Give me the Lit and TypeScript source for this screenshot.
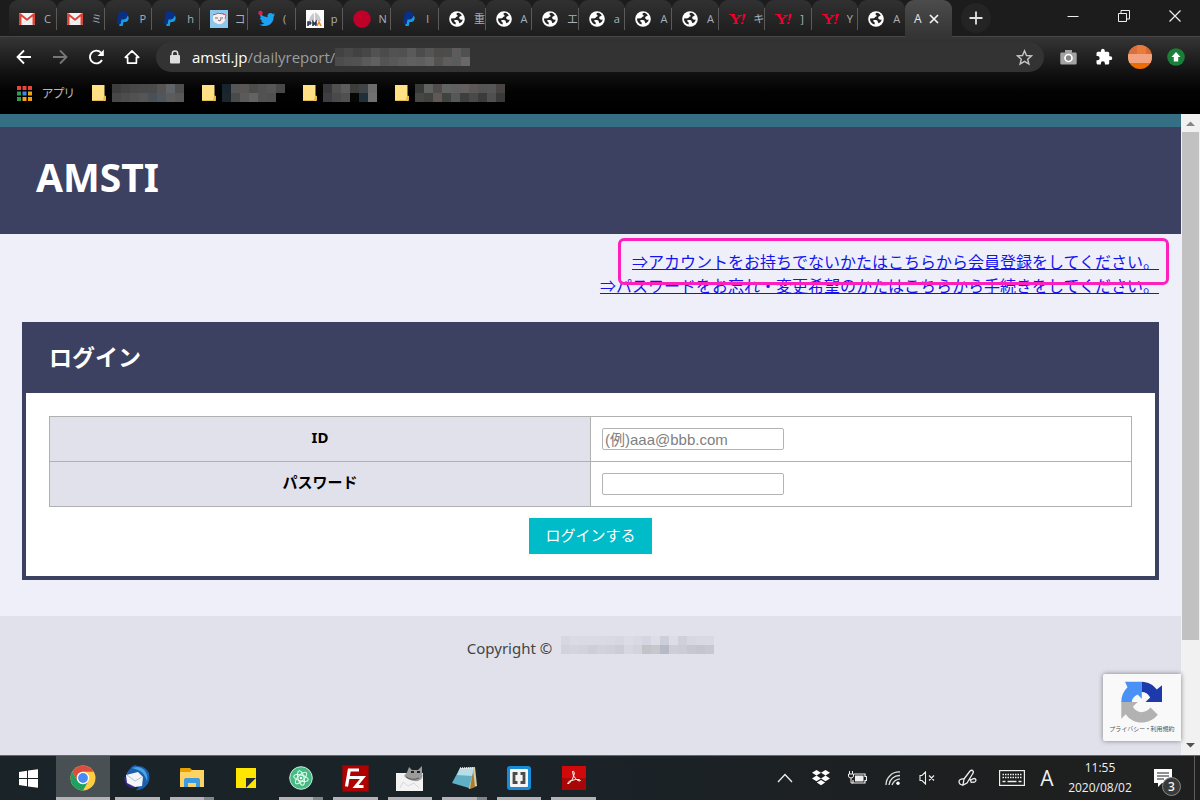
import { LitElement, html, svg, css, nothing } from "lit";
import type { TemplateResult } from "lit";
import { customElement } from "lit/decorators.js";

/* A censored label: rows of grey levels, one square per entry. */
const mosaic = (cell: number, rows: string[][]) => {
  const cols = Math.max(...rows.map((r) => r.length));
  return html`<svg
    width=${cols * cell}
    height=${rows.length * cell}
    viewBox="0 0 ${cols} ${rows.length}"
    shape-rendering="crispEdges"
    aria-hidden="true"
  >
    ${rows.map((row, y) =>
      row.map((c, x) => (c === "-" ? nothing : svg`<rect x=${x} y=${y} width="1" height="1" fill=${"#" + c} />`))
    )}
  </svg>`;
};
const cells = (s: string) => s.split(" ");

const gmail = html`<svg width="16" height="16" viewBox="0 0 16 16">
  <rect y="2" width="16" height="12" rx="1" fill="#f2f2f2" />
  <path d="M0 3v10q0 1 1 1h1.500V5.500L8 10l5.500-4.500V14H15q1 0 1-1V3q0-1-1.200-1L8 7.500 1.200 2Q0 2 0 3z" fill="#db4437" />
  <path d="M2.500 14 7 9.500M13.500 14 9 9.500" stroke="#d5d5d5" stroke-width=".7" />
</svg>`;
const paypal = html`<svg width="16" height="16" viewBox="0 0 16 16">
  <path d="M5.600 4.500h6.200c2.300.7 2.500 3.400 1 5.200-1 1.200-2.600 1.400-4.300 1.300L7.700 15H4.300z" fill="#1a9ce0" />
  <path d="M4 1h5.200c3 0 4 2 3 4.700-.8 2.300-2.600 3-5.700 2.900L5.600 13H1.800z" fill="#0a2f86" />
</svg>`;
const sheep = html`<svg width="18" height="18" viewBox="0 0 18 18">
  <rect width="18" height="18" fill="#8cc8ee" />
  <path d="M3 5q5-4 11-1 3 1 2 4l-2 4q-4 4-8 1-3-1-3-4z" fill="#f6eeee" />
  <path d="M3 5q5-3 11-1M5 8h3m2 0h3M8 10l2 1 1-2" fill="none" stroke="#685a62" stroke-width=".9" />
  <path d="M13 4l3 1-1 4" fill="none" stroke="#d85a62" />
</svg>`;
const twitter = html`<svg width="18" height="18" viewBox="0 0 18 18">
  <path d="M1.500 14.500c2 .2 3.500-.2 4.800-1.200-1.600-.1-2.700-1-3.100-2.200h1.400C3 10.500 2 9.300 2 7.800l1.400.4C2 7 1.800 5.300 2.600 3.800 4.400 5.900 6.700 7 9.500 7.200 9 4.400 10.700 3 12.400 3c1 0 1.800.4 2.400 1l2-.8-1.300 1.900 1.700-.5-1.500 1.700C15.800 12 12 16 7 16c-2 0-4-.5-5.500-1.500z" fill="#1da1f2" />
  <circle cx="2.500" cy="3" r="2.200" fill="#e01e5a" />
</svg>`;
const pma = html`<svg width="18" height="18" viewBox="0 0 18 18">
  <rect width="18" height="18" fill="#fbfbfb" />
  <path d="M3 11Q4 5 8 3v8zM9 11V2q5 3 6 9z" fill="#c9c9cd" />
  <path d="M2 16v-4h2q1.500 1 0 2H2M7 16v-4l1.500 2 1.500-2v4" fill="none" stroke="#2b3454" stroke-width="1.600" />
  <path d="M11 16l2-4 2 4" fill="none" stroke="#f08c14" stroke-width="1.600" />
</svg>`;
const dot = html`<svg width="18" height="18" viewBox="0 0 18 18"><circle cx="9" cy="9" r="8.700" fill="#bf0029" /></svg>`;
const globe = html`<svg width="16" height="16" viewBox="0 0 16 16">
  <circle cx="8" cy="8" r="7.800" fill="#fff" />
  <path d="M9 1.800c-2 .6-2 1.600-.8 2.200.8.400.6 1.500-.6 1.700-1 .2-.7 1.300-1.700 1.500L2 7.400c-.2 2.800 1.600 5.300 4.600 6.200l.2-2c-1.300-.5-1.600-1.600-1.400-2.600 2.300 0 4.300-.2 4.400 1.700l.6 1.500c1.600-.2 3-2 3.400-3.700-1.300.5-2.700.2-3.300-.7-.8-1.200 0-2.200 1-2.500l1.300-.8C12 3 10.700 2.100 9 1.800z" fill="#242424" />
</svg>`;
const yahoo = html`<svg width="17" height="16" viewBox="0 0 17 16">
  <path d="M0 3h6v1H4.800l2.500 3.500L10 5H8.700V4H13v1h-1L8 8.800V12h1.300v1H4.200v-1h1.500V8.900L1.900 4H0zM14 3h3l-2.200 6.800h-1.200zM12.800 11h2l-.7 2h-2z" fill="#f0002c" />
</svg>`;
const folder = html`<svg width="14" height="16" viewBox="0 0 14 16">
  <path d="M0 0h12.500v11H14v3.500q0 1.500-1.500 1.500H0z" fill="#ffe084" />
  <path d="M12.500 10.500q-1 1-1 3l-.5 1.800h3V11z" fill="#e9b93f" />
  <path d="M0 15.500h12" stroke="#e3bd50" />
</svg>`;

interface Tab {
  icon: TemplateResult;
  text: string;
}
const firstTabs: Tab[] = [
  { icon: gmail, text: "C" },
  { icon: gmail, text: "ミ" },
  { icon: paypal, text: "P" },
  { icon: paypal, text: "h" },
  { icon: sheep, text: "コ" },
  { icon: twitter, text: "(" },
  { icon: pma, text: "p" },
  { icon: dot, text: "N" },
  { icon: paypal, text: "l" },
];
const moreTabs: Tab[] = [
  { icon: globe, text: "重" },
  { icon: globe, text: "A" },
  { icon: globe, text: "エ" },
  { icon: globe, text: "a" },
  { icon: globe, text: "A" },
  { icon: globe, text: "A" },
  { icon: yahoo, text: "キ" },
  { icon: yahoo, text: "]" },
  { icon: yahoo, text: "Y" },
  { icon: globe, text: "A" },
];

const address = mosaic(9, [
  cells("424242 484848 424242 464646 525252 4b4b4b 525252 505050 5a5a5a 4c4c4c 555555 4e4a4a 4c4c4c 5c5c5c 505050"),
  cells("4c4c4c 505050 525252 5a5a5a 606060 545454 585858 5c5c5c 606060 5c5e60 646464 545250 605c5a 585c5c 686868"),
]);

const bookmarks = [
  mosaic(9, [
    cells("3d3d3d 434343 474747 494949 4a4a4a 545454 606468 4e4e4e"),
    cells("484848 4d4d4d 515151 555555 4a5058 505560 5c5c5c 585858"),
  ]),
  mosaic(9, [
    cells("18242b 555555 5a5656 4c4c4c 525252 565656 484848"),
    cells("1b262c 4a4a4a 5a5a5a 666262 525252 505050 -"),
  ]),
  mosaic(9, [
    cells("38383c 505050 5c5c5c 3c3c38 404448 6c6c6c"),
    cells("3e3e42 4a4a4a 505050 060606 20303a 70706e"),
  ]),
  mosaic(9, [
    cells("383a3a 606260 504c4c 626464 606060 646060 5c5858 545454 565656 484444"),
    cells("464644 404240 605852 404440 565858 3c3e40 4c4848 3a3c3c 505050 383a3a"),
  ]),
];

@customElement("browser-chrome")
export class BrowserChrome extends LitElement {
  static styles = css`
    :host {
      display: block;
      color: #e8eaed;
      font-family: "Open Sans", "Noto Sans CJK JP", sans-serif;
    }
    svg {
      display: block;
      flex: none;
    }
    button {
      display: grid;
      place-items: center;
      padding: 0;
      border: 0;
      background: none;
      color: inherit;
      font: inherit;
    }
    .strip {
      display: flex;
      box-sizing: border-box;
      height: 37px;
      padding-left: 9px;
      background: #1c1c1c;
      border-bottom: 1px solid #474747;
    }
    .group {
      display: flex;
      width: 430px;
    }
    .group.more {
      width: 466px;
    }
    .tab {
      position: relative;
      box-sizing: border-box;
      display: flex;
      align-items: center;
      flex: 1 1 0;
      min-width: 0;
      gap: 9px;
      padding: 1px 0 0 10px;
      border-radius: 9px 9px 0 0;
      background: linear-gradient(#313131, #1c1c1c);
      font-size: 11px;
      color: #a9b0b6;
      font-feature-settings: "palt";
    }
    .tab::after {
      content: "";
      position: absolute;
      right: 0;
      top: 8px;
      width: 1px;
      height: 22px;
      background: #5a5a5a;
    }
    .more .tab:last-child::after {
      display: none;
    }
    .slot {
      display: grid;
      place-items: center;
      flex: none;
      width: 16px;
    }
    .title {
      white-space: nowrap;
      line-height: 20px;
    }
    .active {
      box-sizing: border-box;
      display: flex;
      align-items: center;
      gap: 7px;
      width: 47px;
      height: 37px;
      padding-left: 9px;
      border-radius: 9px 9px 0 0;
      background: linear-gradient(#4c4c4c, #343434);
      font-size: 12px;
    }
    .plus {
      width: 30px;
      height: 30px;
      margin: 3px 0 0 9px;
      border-radius: 50%;
      background: #242424;
    }
    .controls {
      display: flex;
      margin-left: auto;
    }
    .controls button {
      width: 51px;
      height: 31px;
    }
    .bars {
      background: linear-gradient(#353535, #121212 46%, #030303 70%, #000);
    }
    .toolbar {
      display: flex;
      align-items: center;
      height: 40px;
      padding: 0 6px;
    }
    .toolbar button {
      width: 36px;
      height: 30px;
    }
    .omni {
      box-sizing: border-box;
      display: flex;
      align-items: center;
      flex: 1;
      height: 30px;
      margin: 0 6px;
      padding: 0 2px 0 13px;
      border-radius: 15px;
      background: #333;
      font-size: 15px;
    }
    .url {
      padding-left: 11px;
      color: #9b9ea1;
      white-space: nowrap;
    }
    .host {
      color: #fff;
    }
    .star {
      margin-left: auto;
    }
    .avatar {
      overflow: hidden;
      border-radius: 50%;
    }
    .marks {
      box-sizing: border-box;
      display: flex;
      align-items: center;
      height: 37px;
      padding: 0 17px 5px;
      font-size: 12px;
      font-feature-settings: "palt";
    }
    .apps {
      display: flex;
      align-items: center;
      gap: 10px;
      width: 75px;
      color: #b4b8bc;
    }
    .mark {
      display: flex;
      align-items: center;
      gap: 6px;
      margin-right: 18px;
    }
  `;

  private tab(t: Tab) {
    return html`<div class="tab"><span class="slot">${t.icon}</span><span class="title">${t.text}</span></div>`;
  }

  render() {
    const dots = ["#e8453c", "#e8453c", "#e8453c", "#2f9d57", "#3a8be8", "#f2a213", "#2f9d57", "#f2a213", "#f2a213"];
    return html`
      <div class="strip">
        <div class="group">${firstTabs.map((t) => this.tab(t))}</div>
        <div class="group more">${moreTabs.map((t) => this.tab(t))}</div>
        <div class="active">
          <span>A</span>
          <button aria-label="タブを閉じる">
            <svg width="10" height="10" viewBox="0 0 10 10"><path d="M1 1l8 8M9 1l-8 8" stroke="#f4f4f4" stroke-width="1.700" /></svg>
          </button>
        </div>
        <button class="plus" aria-label="新しいタブ">
          <svg width="14" height="14" viewBox="0 0 14 14"><path d="M7 .5v13M.5 7h13" stroke="#e2e2e2" stroke-width="1.800" /></svg>
        </button>
        <div class="controls">
          <button aria-label="最小化">
            <svg width="12" height="12" viewBox="0 0 12 12"><path d="M.5 6.500h11" stroke="#eee" /></svg>
          </button>
          <button aria-label="元に戻す">
            <svg width="12" height="12" viewBox="0 0 12 12"><path d="M.5 3.500h8v8h-8zM3 3.500v-3h8.500v8.500H8.500" fill="none" stroke="#eee" /></svg>
          </button>
          <button aria-label="閉じる">
            <svg width="12" height="12" viewBox="0 0 12 12"><path d="M.5.5l11 11M11.500.5l-11 11" stroke="#eee" stroke-width="1.200" /></svg>
          </button>
        </div>
      </div>
      <div class="bars">
        <div class="toolbar">
          <button aria-label="戻る">
            <svg width="16" height="16" viewBox="0 0 16 16"><path d="M15 8H1.800M8 1.500 1.500 8 8 14.500" fill="none" stroke="#fff" stroke-width="1.800" /></svg>
          </button>
          <button aria-label="進む">
            <svg width="16" height="16" viewBox="0 0 16 16"><path d="M1 8h13.200M8 1.500 14.500 8 8 14.500" fill="none" stroke="#777" stroke-width="1.800" /></svg>
          </button>
          <button aria-label="再読み込み">
            <svg width="17" height="16" viewBox="0 0 17 16">
              <path d="M14 11A6.400 6.400 0 1 1 13 3.600" fill="none" stroke="#fff" stroke-width="1.900" />
              <path d="M15.800.6v6.300H9.500z" fill="#fff" />
            </svg>
          </button>
          <button aria-label="ホーム">
            <svg width="16" height="16" viewBox="0 0 16 16"><path d="M1.300 8.300 8 1.800l6.700 6.500h-2.300v5.800H3.600V8.300z" fill="none" stroke="#fff" stroke-width="1.700" stroke-linejoin="round" /></svg>
          </button>
          <div class="omni">
            <svg width="12" height="14" viewBox="0 0 12 14">
              <rect x="1" y="5" width="10" height="8.500" rx="1" fill="#dedede" />
              <path d="M3.300 6V3.600a2.700 2.700 0 0 1 5.400 0V6" fill="none" stroke="#dedede" stroke-width="1.500" />
            </svg>
            <span class="url"><span class="host">amsti.jp</span>/dailyreport/</span>
            ${address}
            <button class="star" aria-label="ブックマークに追加">
              <svg width="17" height="17" viewBox="0 0 17 17"><path d="M8.500 1.800l2 4.700 5 .4-3.800 3.300 1.200 4.900-4.400-2.700-4.400 2.700 1.200-4.900-3.800-3.300 5-.4z" fill="none" stroke="#c6c6c6" stroke-width="1.400" /></svg>
            </button>
          </div>
          <button aria-label="カメラ">
            <svg width="17" height="16" viewBox="0 0 17 16">
              <path d="M1.500 3.500H5V1h7v2.500h3.500q1.200 0 1.200 1.200v9.500q0 1.300-1.200 1.300h-14Q.3 15.500.3 14.200V4.700q0-1.200 1.200-1.200z" fill="#a3a3a3" />
              <circle cx="8.500" cy="9" r="3.500" fill="#858585" stroke="#fff" stroke-width="1.700" />
            </svg>
          </button>
          <button aria-label="拡張機能">
            <svg width="18" height="18" viewBox="0 0 24 24">
              <path d="M20.500 11H19V7a2 2 0 0 0-2-2h-4V3.500a2.500 2.500 0 0 0-5 0V5H4a2 2 0 0 0-2 2v3.800h1.500a2.700 2.700 0 0 1 0 5.400H2V20c0 1.100.9 2 2 2h3.800v-1.500a2.700 2.700 0 0 1 5.400 0V22H17a2 2 0 0 0 2-2v-4h1.500a2.500 2.500 0 0 0 0-5z" fill="#fff" />
            </svg>
          </button>
          <button aria-label="プロフィール">
            <svg class="avatar" width="24" height="24" viewBox="0 0 24 24">
              <rect width="24" height="24" fill="#ed6c02" />
              <path d="M0 0h9v9H0z" fill="#d8703c" />
              <path d="M9 0h9v9H9z" fill="#ec7a3f" />
              <path d="M18 0h6v9h-6z" fill="#d66c35" />
              <path d="M0 9h24v9H0z" fill="#f3a27f" />
            </svg>
          </button>
          <button aria-label="更新">
            <svg width="18" height="18" viewBox="0 0 18 18">
              <circle cx="9" cy="9" r="8.800" fill="#188038" />
              <path d="M9 4l4.500 5h-2.300v4.500H6.800V9H4.500z" fill="#fff" />
            </svg>
          </button>
        </div>
        <div class="marks">
          <span class="apps">
            <svg width="15" height="15" viewBox="0 0 15 15">
              ${dots.map((c, i) => svg`<rect x=${(i % 3) * 5.5} y=${Math.floor(i / 3) * 5.5} width="4" height="4" fill=${c} />`)}
            </svg>
            <span>アプリ</span>
          </span>
          ${bookmarks.map((b) => html`<span class="mark">${folder}${b}</span>`)}
        </div>
      </div>
    `;
  }
}

@customElement("login-page")
export class LoginPage extends LitElement {
  static styles = css`
    :host {
      display: flex;
      min-height: 0;
      background: #eeeff8;
      color: #000;
      font-family: "Noto Sans", "Noto Sans CJK JP", sans-serif;
    }
    .page {
      position: relative;
      display: flex;
      flex-direction: column;
      flex: 1;
      min-width: 0;
    }
    .header {
      box-sizing: border-box;
      height: 120px;
      padding: 22px 36px;
      border-top: 13px solid #356f83;
      background: #3c4162;
      color: #fff;
    }
    h1 {
      margin: 0;
      font-size: 39px;
      line-height: 56px;
    }
    .main {
      padding: 16px 22px 36px;
    }
    .links {
      display: flex;
      flex-direction: column;
      align-items: flex-end;
      margin-bottom: 24px;
      font-size: 16px;
      line-height: 24px;
    }
    a {
      color: #1414f0;
    }
    .marked {
      position: relative;
    }
    .marked::after {
      content: "";
      position: absolute;
      z-index: 1;
      inset: -12px -10px -11px -14px;
      border: 3px solid #ff1fbe;
      border-radius: 6px;
      pointer-events: none;
    }
    .panel {
      border: 4px solid #3c4162;
      background: #fff;
    }
    h2 {
      margin: 0;
      padding: 15px 23px 20px;
      background: #3c4162;
      color: #fff;
      font-size: 23px;
      line-height: 32px;
    }
    form {
      display: flex;
      flex-direction: column;
      align-items: center;
      gap: 11px;
      padding: 23px 23px 22px;
    }
    table {
      width: 100%;
      table-layout: fixed;
      border-collapse: collapse;
    }
    th,
    td {
      box-sizing: border-box;
      height: 45px;
      padding: 0 11px;
      border: 1px solid #b0b0b0;
      text-align: left;
    }
    th {
      padding-bottom: 5px;
      background: #e0e1eb;
      font-size: 15px;
      text-align: center;
    }
    input {
      box-sizing: border-box;
      display: block;
      width: 182px;
      height: 22px;
      padding: 0 2px;
      border: 1px solid #b4b4b4;
      border-radius: 2px;
      background: #fff;
      font: 15px "Liberation Sans", "Noto Sans CJK JP", sans-serif;
    }
    input::placeholder {
      color: #808080;
    }
    .submit {
      height: 36px;
      padding: 0 16px 4px;
      border: 0;
      background: #00bcc8;
      color: #fff;
      font: 15px "Noto Sans CJK JP", sans-serif;
    }
    .footer {
      display: flex;
      align-items: flex-start;
      justify-content: center;
      gap: 9px;
      flex: 1;
      padding: 20px;
      background: #e0e1eb;
      color: #444;
      font-size: 15px;
      line-height: 24px;
    }
    .badge {
      position: absolute;
      right: 0;
      bottom: 14px;
      display: flex;
      flex-direction: column;
      align-items: center;
      box-sizing: border-box;
      width: 78px;
      height: 67px;
      padding-top: 7px;
      border-radius: 2px 0 0 2px;
      background: #f9f9f9;
      box-shadow: 0 0 5px #808080;
      color: #555;
      font-size: 6px;
      line-height: 12px;
      white-space: nowrap;
    }
    .scroll {
      display: flex;
      flex-direction: column;
      align-items: center;
      width: 19px;
      background: #f1f1f1;
    }
    .scroll svg {
      flex: none;
    }
    .track {
      display: flex;
      flex-direction: column;
      flex: 1;
      width: 17px;
    }
    .thumb {
      flex: 0 0 84%;
      background: #c1c1c1;
    }
  `;

  render() {
    return html`
      <div class="page">
        <header class="header"><h1>AMSTI</h1></header>
        <main class="main">
          <nav class="links">
            <a class="marked" href="#register">⇒アカウントをお持ちでないかたはこちらから会員登録をしてください。</a>
            <a href="#password">⇒パスワードをお忘れ・変更希望のかたはこちらから手続きをしてください。</a>
          </nav>
          <section class="panel">
            <h2>ログイン</h2>
            <form>
              <table>
                <tr>
                  <th scope="row"><label for="id">ID</label></th>
                  <td><input id="id" type="text" placeholder="(例)aaa@bbb.com" /></td>
                </tr>
                <tr>
                  <th scope="row"><label for="pw">パスワード</label></th>
                  <td><input id="pw" type="password" /></td>
                </tr>
              </table>
              <button class="submit" type="button">ログインする</button>
            </form>
          </section>
        </main>
        <footer class="footer">
          <span>Copyright ©</span>
          ${mosaic(9, [
            cells("d6d7e1 dadbe5 d9dae4 d9dae4 d9dae4 d8d9e3 d6d7e1 dbdce6 d8d9e3 d4d5df dcdde7 ccced8 dcdde7 cfd0da d6d7e1 d8d9e3 d8d9e3"),
            cells("d0d2dc d3d4de d1d2dc cdced8 d1d2dc cfd0da cbccd6 d6d7e1 d2d3dd c2c3c8 c6c7cc b6b9c8 cdced8 ccccd4 c6c7d0 c4c5ce c8c8d0"),
          ])}
        </footer>
        <div class="badge">
          <svg width="42" height="42" viewBox="0 0 42 42">
            <path d="M.3 21A20.500 20.500 0 0 1 6.500 6.300L4 .8h16.800v17L16.600 13.500Q11 16 10.800 21z" fill="#4a90f5" />
            <path d="M20.800.8C27 1 32.500 4 35.800 8.600L41 4.300V21H24.500l4.700-4.600Q26 11 20.800 11z" fill="#1c3aa9" />
            <path d="M.3 21h16.500l-4.900 4.600C15 32.300 24 33.300 29.500 26.500l7.300 7.300C28 44.500 12 44 4.800 33.200L.3 37.700z" fill="#b2b2b2" />
          </svg>
          <span>プライバシー • 利用規約</span>
        </div>
      </div>
      <div class="scroll" aria-hidden="true">
        <svg width="17" height="18" viewBox="0 0 17 18"><path d="M4 12l4.500-4.500L13 12z" fill="#858585" /></svg>
        <div class="track"><div class="thumb"></div></div>
        <svg width="17" height="18" viewBox="0 0 17 18"><path d="M4 6l4.500 4.500L13 6z" fill="#505050" /></svg>
      </div>
    `;
  }
}

interface Task {
  name: string;
  icon: TemplateResult;
  state: "" | "open" | "stack" | "current";
}

const tasks: Task[] = [
  {
    name: "スタート",
    state: "",
    icon: html`<svg width="19" height="19" viewBox="0 0 19 19"><path d="M0 3l8-1.200V9H0zM9 1.600 19 .2V9H9zM0 10h8v7.200L0 16zM9 10h10v8.800L9 17.400z" fill="#fff" /></svg>`,
  },
  {
    name: "Chrome",
    state: "current",
    icon: html`<svg width="26" height="26" viewBox="0 0 26 26">
      <circle cx="13" cy="13" r="12.500" fill="#ffcd43" />
      <path d="M2.200 6.750A12.500 12.500 0 0 1 23.800 6.750H13A6.250 6.250 0 0 0 7.600 16.100z" fill="#dc4c3f" />
      <path d="M2.200 6.750A12.500 12.500 0 0 0 13 25.500L18.400 16.100A6.250 6.250 0 0 1 7.600 16.100z" fill="#1ba261" />
      <circle cx="13" cy="13" r="6.200" fill="#fff" />
      <circle cx="13" cy="13" r="4.900" fill="#4a8af4" />
    </svg>`,
  },
  {
    name: "Thunderbird",
    state: "open",
    icon: html`<svg width="28" height="28" viewBox="0 0 28 28">
      <path d="M7 5Q9 1 14 1l-1 1Q22 1 26 9q2 9-4 14-4 4-9 3l3-3Q5 23 1 13l2 1Q3 8 7 5z" fill="#1d5fae" />
      <path d="M9 4q8-3 13 3 3 5 2 10-3-9-9-11z" fill="#48a5e6" />
      <path d="M1 13q0 8 7 11l8-1z" fill="#35268e" />
      <path d="M3 11l12-3 5 5-1 9-7 1-8-4z" fill="#f4f5f8" />
      <path d="M4 11l8 6 7-4" fill="none" stroke="#b6bdcc" />
    </svg>`,
  },
  {
    name: "エクスプローラー",
    state: "stack",
    icon: html`<svg width="24" height="20" viewBox="0 0 24 20">
      <path d="M0 1q0-1 1-1h9l2 2h11v4H0z" fill="#e8a200" />
      <path d="M0 4h10l2-2h12v17H0z" fill="#ffd264" />
      <path d="M4 19v-7q0-2 2-2h12q2 0 2 2v7h-4v-4H8v4z" fill="#3f9be0" />
    </svg>`,
  },
  {
    name: "付箋",
    state: "",
    icon: html`<svg width="20" height="20" viewBox="0 0 20 20"><path d="M0 0h20v10L10 20H0z" fill="#ffe600" /><path d="M10 20V10h10z" fill="#252b2e" /><path d="M20 10v10H10z" fill="#ffe600" /></svg>`,
  },
  {
    name: "Atom",
    state: "stack",
    icon: html`<svg width="24" height="24" viewBox="0 0 24 24">
      <circle cx="12" cy="12" r="11.300" fill="#48b985" stroke="#c6efdc" />
      <g fill="none" stroke="#d9fbea" stroke-width="1.100">
        <ellipse cx="12" cy="12" rx="7.500" ry="3" transform="rotate(15 12 12)" />
        <ellipse cx="12" cy="12" rx="7.500" ry="3" transform="rotate(75 12 12)" />
        <ellipse cx="12" cy="12" rx="7.500" ry="3" transform="rotate(135 12 12)" />
      </g>
      <circle cx="12" cy="12" r="1.300" fill="#fff" />
    </svg>`,
  },
  {
    name: "FileZilla",
    state: "open",
    icon: html`<svg width="27" height="27" viewBox="0 0 27 27">
      <rect x=".5" y=".5" width="26" height="26" fill="#b00000" stroke="#7d0c0c" stroke-dasharray="2 1" />
      <path d="M4.500 21.500 7.300 5H17M6.500 12.500h8" fill="none" stroke="#fff" stroke-width="3.200" />
      <path d="M13 12.500h8L13.500 21.500h8" fill="none" stroke="#fff" stroke-width="2.800" />
    </svg>`,
  },
  {
    name: "GIMP",
    state: "open",
    icon: html`<svg width="28" height="26" viewBox="0 0 28 26">
      <path d="M0 8h27v18H0z" fill="#f3f3f3" />
      <path d="M8 11q4-4 5-9l3 3h6l4-4v7q2 6-4 8-8 1-14-5z" fill="#9b9b9b" />
      <path d="M15 7h3m3 0h3" stroke="#222" stroke-width="2.200" />
      <path d="M10 12q6 4 13 1" fill="none" stroke="#555" />
      <path d="M4 23l3-6 5 4 6-3 5 5" fill="none" stroke="#d8d8d8" />
    </svg>`,
  },
  {
    name: "メモ帳",
    state: "stack",
    icon: html`<svg width="25" height="24" viewBox="0 0 25 24">
      <path d="M10 2l13-1 2 19-8 3z" fill="#d8cba4" />
      <path d="M21 3l2 18-5 2z" fill="#a87c33" />
      <path d="M8 2h14l-5 20-17-5z" fill="#5fb0c4" />
      <path d="M8 2h14l-2 8-15-1z" fill="#b8dde4" />
      <path d="M8 2h14" stroke="#eee" stroke-width="1.500" stroke-dasharray="1 1" />
    </svg>`,
  },
  {
    name: "Brackets",
    state: "open",
    icon: html`<svg width="24" height="24" viewBox="0 0 24 24">
      <rect width="24" height="24" rx="3" fill="#178bd6" />
      <rect x="3" y="3" width="18" height="18" rx="1" fill="#f4f4f4" />
      <path d="M10.500 7.500H7v9h3.500M13.500 7.500H17v9h-3.500" fill="none" stroke="#4b4b4b" stroke-width="2.800" />
    </svg>`,
  },
  {
    name: "Acrobat",
    state: "open",
    icon: html`<svg width="24" height="24" viewBox="0 0 24 24">
      <rect width="24" height="24" fill="#d00a0a" />
      <path d="M0 12h24v12H0z" fill="#8f0505" opacity=".6" />
      <path d="M10.500 5.500q2-1 1.700 2.500-1 5.500-4.700 9-2 1.500-2 0 1-2.500 8-3.500 5-.4 5 1-1 1.500-4-1-4-3-4-8z" fill="none" stroke="#fff" />
    </svg>`,
  },
];

@customElement("task-bar")
export class TaskBar extends LitElement {
  static styles = css`
    :host {
      box-sizing: border-box;
      display: flex;
      justify-content: space-between;
      height: 45px;
      border-top: 1px solid #5b6b70;
      background: linear-gradient(90deg, #1a2328, #1b2328 50%, #1d1f20 80%, #1f1f1f);
      color: #f0f0f0;
      font-family: "Open Sans", "Noto Sans", sans-serif;
    }
    svg {
      display: block;
    }
    button {
      display: grid;
      place-items: center;
      padding: 0;
      border: 0;
      background: none;
      color: inherit;
      font: inherit;
    }
    .tasks {
      display: grid;
      grid-template-columns: repeat(11, 1fr);
      width: 600px;
      padding-left: 1px;
    }
    .task {
      position: relative;
    }
    .current {
      background: #495054;
    }
    .task::after {
      position: absolute;
      right: 5px;
      bottom: 0;
      left: 5px;
      height: 3px;
      background: #b5b3b7;
    }
    .open::after,
    .stack::after,
    .current::after {
      content: "";
    }
    .current::after {
      right: 0;
      left: 0;
    }
    .stack::after {
      background: linear-gradient(90deg, #b5b3b7 78%, #858589 78%);
    }
    .tray {
      display: grid;
      grid-template-columns: 36px 36px 36px 36px 32px 48px 42px 28px 78px 55px 6px;
    }
    .ime {
      font-size: 21px;
    }
    .clock {
      align-content: center;
      font-size: 12px;
      line-height: 20px;
      text-align: center;
    }
    .note {
      position: relative;
      padding-right: 7px;
    }
    .count {
      position: absolute;
      right: 13px;
      bottom: 4px;
      display: grid;
      place-items: center;
      box-sizing: border-box;
      width: 19px;
      height: 19px;
      border: 1px solid #8a8a8a;
      border-radius: 50%;
      background: #3a3a3a;
      font-size: 12px;
      font-weight: 600;
      line-height: 16px;
    }
    .desktop {
      border-left: 1px solid #5c5c5c;
    }
  `;

  render() {
    return html`
      <nav class="tasks">
        ${tasks.map((t) => html`<button class="task ${t.state}" aria-label=${t.name}>${t.icon}</button>`)}
      </nav>
      <div class="tray">
        <button aria-label="隠れているインジケーター">
          <svg width="16" height="10" viewBox="0 0 16 10"><path d="M1 9l7-7.500L15 9" fill="none" stroke="#eee" stroke-width="1.300" /></svg>
        </button>
        <button aria-label="Dropbox">
          <svg width="18" height="16" viewBox="0 0 18 16"><path d="M4.500 0 9 2.800 4.500 5.600 0 2.800zM13.500 0 18 2.800l-4.500 2.800L9 2.800zM4.500 5.600 9 8.400l-4.500 2.800L0 8.400zM13.500 5.600 18 8.400l-4.500 2.800L9 8.400zM9 9.900l4.200 2.700L9 15.300l-4.200-2.700z" fill="#fff" /></svg>
        </button>
        <button aria-label="バッテリー">
          <svg width="19" height="14" viewBox="0 0 19 14">
            <path d="M6 3h11v2.500h1.500v4H17V12H5V9" fill="none" stroke="#eee" stroke-width="1.200" />
            <path d="M7 4.500h8.500v6H7z" fill="#eee" />
            <path d="M1.500 0v3m3-3v3M.5 3h5v2q0 2-2.500 2T.5 5zM3 7v5h2" fill="none" stroke="#eee" />
          </svg>
        </button>
        <button aria-label="Wi-Fi">
          <svg width="16" height="16" viewBox="0 0 16 16">
            <path d="M1 15A13 13 0 0 1 15 2M4 15A10.500 10.500 0 0 1 15 5.500M7 15q2-5.500 8-6.200" fill="none" stroke="#ddd" stroke-width="1.300" />
            <circle cx="13" cy="13.300" r="1.700" fill="#fff" />
          </svg>
        </button>
        <button aria-label="音量">
          <svg width="17" height="14" viewBox="0 0 17 14"><path d="M1 4.500h2L6.500 1v12L3 9.500H1zM10 4.500l5 5m0-5l-5 5" fill="none" stroke="#eee" stroke-width="1.100" /></svg>
        </button>
        <button aria-label="ペン">
          <svg width="19" height="18" viewBox="0 0 19 18"><path d="M6 10l6-8q2-1.500 3 0 1 1-.5 3L9 14l-4 2zM6 10q-5-.5-5 3 .5 3 4 3l4-2M13 11q4-3 5 0-.5 3-4 2M12 10l1.500 4" fill="none" stroke="#eee" stroke-width="1.300" /></svg>
        </button>
        <button aria-label="タッチキーボード">
          <svg width="26" height="16" viewBox="0 0 26 16">
            <rect x=".6" y=".6" width="24.800" height="14.800" fill="none" stroke="#eee" stroke-width="1.200" />
            <path d="M3.500 4.500h19M3.500 7.500h19" stroke="#eee" stroke-width="1.500" stroke-dasharray="1.500 1" />
            <path d="M3.500 11.500h3m2 0h9m2 0h3" stroke="#eee" stroke-width="1.500" />
          </svg>
        </button>
        <button class="ime" aria-label="IME">A</button>
        <div class="clock"><div>11:55</div><div>2020/08/02</div></div>
        <button class="note" aria-label="通知">
          <svg width="18" height="18" viewBox="0 0 18 18">
            <path d="M0 0h18v14H8l-4 4v-4H0z" fill="#fff" />
            <path d="M3 4h12M3 7h12M3 10h7" stroke="#222" stroke-width="1.200" />
          </svg>
          <span class="count">3</span>
        </button>
        <div class="desktop"></div>
      </div>
    `;
  }
}

@customElement("app-root")
export class AppRoot extends LitElement {
  static styles = css`
    :host {
      display: flex;
      flex-direction: column;
      min-height: 100vh;
      background: #eeeff8;
    }
    .view {
      flex: 1;
    }
  `;

  render() {
    return html`
      <browser-chrome></browser-chrome>
      <login-page class="view"></login-page>
      <task-bar></task-bar>
    `;
  }
}
